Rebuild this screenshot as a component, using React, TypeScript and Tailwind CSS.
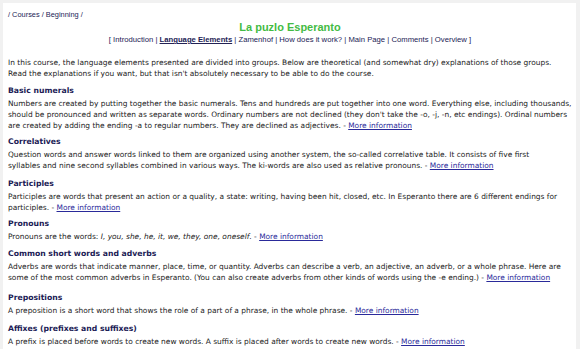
import React from "react";

const body = "text-[7.45px] leading-[11px] text-[#222] whitespace-nowrap";
const head = "text-[7.7px] leading-[12px] font-bold text-[#1b1b55] whitespace-nowrap";
const More = () => (
  <a className="text-[#2a2a9a] underline" href="#">More information</a>
);

function Section({ title, children, mt = "mt-[6px]" }: { title: string; children: React.ReactNode; mt?: string }) {
  return (
    <div className={mt}>
      <div className={head}>{title}</div>
      <p className={`${body} mt-[1px]`}>{children}</p>
    </div>
  );
}

export default function App() {
  return (
    <div
      className="w-[580px] h-[349px] overflow-hidden bg-[#f1f1f1] pt-[3px] pl-[3px] pr-[4px]"
      style={{ fontFamily: '"DejaVu Sans", sans-serif' }}
    >
      <div className="h-full bg-white pl-[5px] pr-[4px] pt-[7px]">
        <div
          className="text-[7.4px] leading-[10px] text-[#222255]"
          style={{ fontFamily: '"Liberation Sans", Arial, sans-serif' }}
        >
          / Courses / Beginning /
        </div>
        <div
          className="text-center text-[11px] leading-[14px] font-bold text-[#44bb44]"
          style={{ fontFamily: '"Liberation Sans", Arial, sans-serif' }}
        >
          La puzlo Esperanto
        </div>
        <div
          className="text-center text-[7.7px] leading-[12px] text-[#222255]"
          style={{ fontFamily: '"Liberation Sans", Arial, sans-serif' }}
        >
          [ Introduction | <span className="font-bold underline">Language Elements</span> | Zamenhof | How does it work? | Main Page | Comments | Overview ]
        </div>
        <p className={`${body} mt-[11px]`}>
          In this course, the language elements presented are divided into groups. Below are theoretical (and somewhat dry) explanations of those groups.
          <br />
          Read the explanations if you want, but that isn't absolutely necessary to be able to do the course.
        </p>
        <Section title="Basic numerals">
          Numbers are created by putting together the basic numerals. Tens and hundreds are put together into one word. Everything else, including thousands,
          <br />
          should be pronounced and written as separate words. Ordinary numbers are not declined (they don't take the -o, -j, -n, etc endings). Ordinal numbers
          <br />
          are created by adding the ending -a to regular numbers. They are declined as adjectives. - <More />
        </Section>
        <Section title="Correlatives" mt="mt-[5px]">
          Question words and answer words linked to them are organized using another system, the so-called correlative table. It consists of five first
          <br />
          syllables and nine second syllables combined in various ways. The ki-words are also used as relative pronouns. - <More />
        </Section>
        <Section title="Participles" mt="mt-[7px]">
          Participles are words that present an action or a quality, a state: writing, having been hit, closed, etc. In Esperanto there are 6 different endings for
          <br />
          participles. - <More />
        </Section>
        <Section title="Pronouns" mt="mt-[5px]">
          Pronouns are the words: <i>I, you, she, he, it, we, they, one, oneself</i>. - <More />
        </Section>
        <Section title="Common short words and adverbs">
          Adverbs are words that indicate manner, place, time, or quantity. Adverbs can describe a verb, an adjective, an adverb, or a whole phrase. Here are
          <br />
          some of the most common adverbs in Esperanto. (You can also create adverbs from other kinds of words using the -e ending.) - <More />
        </Section>
        <Section title="Prepositions" mt="mt-[9px]">
          A preposition is a short word that shows the role of a part of a phrase, in the whole phrase. - <More />
        </Section>
        <Section title="Affixes (prefixes and suffixes)" mt="mt-[7px]">
          A prefix is placed before words to create new words. A suffix is placed after words to create new words. - <More />
        </Section>
      </div>
    </div>
  );
}
